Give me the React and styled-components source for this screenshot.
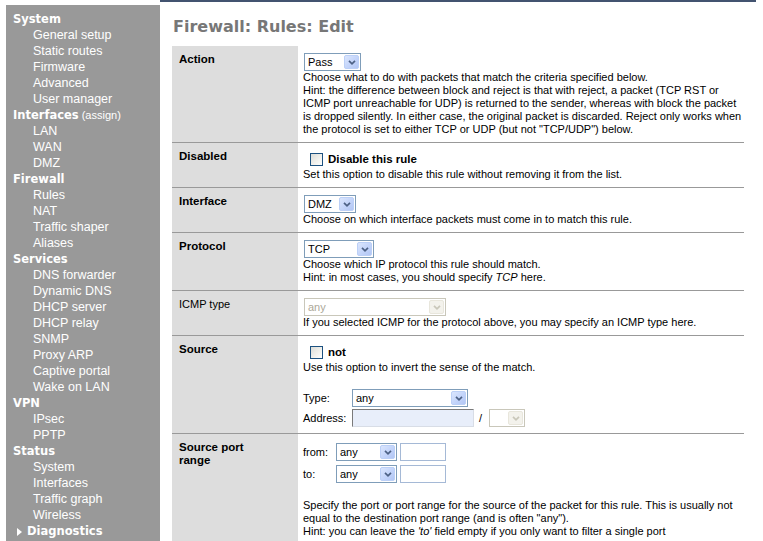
import styled, { createGlobalStyle } from "styled-components";

const GlobalStyle = createGlobalStyle`
  html, body {
    margin: 0;
    padding: 0;
    background: #ffffff;
  }
  body {
    font-family: "Liberation Sans", Arial, sans-serif;
    font-size: 11px;
    color: #000000;
  }
`;

//=========== layout ============
const Page = styled.div`
  display: flex;
  align-items: stretch;
  min-height: 100vh;
`;

const Sidebar = styled.nav`
  box-sizing: border-box;
  width: 154px;
  margin: 5px 0 0 6px;
  padding: 6px 0 0 7px;
  background: #999999;
  color: #ffffff;
`;

const Section = styled.div`
  font-family: "DejaVu Sans", Verdana, sans-serif;
  font-weight: 700;
  font-size: 11.5px;
  line-height: 16px;
  padding-left: ${(p) => (p.$collapsed ? 4 : 0)}px;
  white-space: nowrap;
`;

const SectionHint = styled.span`
  font-family: "Liberation Sans", Arial, sans-serif;
  font-weight: 400;
  font-size: 11px;
  margin-left: 3px;
`;

const Arrow = styled.span`
  display: inline-block;
  width: 0;
  height: 0;
  border-left: 5px solid #ffffff;
  border-top: 4px solid transparent;
  border-bottom: 4px solid transparent;
  margin-right: 5px;
  vertical-align: -1px;
`;

const NavItem = styled.div`
  font-family: "Liberation Sans", Arial, sans-serif;
  font-size: 12.5px;
  line-height: 16px;
  padding-left: 20px;
  white-space: nowrap;
`;

const Main = styled.main`
  flex: 1;
  padding-right: 7px;
`;

const TopBar = styled.div`
  height: 2px;
  background: #435370;
`;

const Content = styled.div`
  padding: 15px 0 0 12px;
`;

const Title = styled.h1`
  margin: 0 0 10px 1px;
  font-family: "DejaVu Sans", Verdana, sans-serif;
  font-weight: 700;
  font-size: 16px;
  line-height: 19px;
  color: #777777;
`;

//=========== form table ============
const FormTable = styled.table`
  width: 572px;
  table-layout: fixed;
  border-collapse: collapse;
  border-spacing: 0;
`;

const LabelCol = styled.col`
  width: 126px;
`;

const LabelCell = styled.td`
  padding: 7px 7px 6px;
  background: #dddddd;
  border-bottom: 1px solid #999999;
  vertical-align: top;
  font-size: ${(p) => (p.$plain ? 11 : 11.5)}px;
  font-weight: ${(p) => (p.$plain ? 400 : 700)};
  line-height: 13px;
`;

const ValueCell = styled.td`
  padding: 7px 5px 6px;
  border-bottom: 1px solid #999999;
  vertical-align: top;
  line-height: 13px;
`;

const Desc = styled.div`
  white-space: nowrap;
  margin-top: ${(p) => p.$gap || 0}px;
`;

//=========== controls ============
const SelectBox = styled.div`
  box-sizing: border-box;
  display: ${(p) => (p.$inline ? "inline-flex" : "flex")};
  align-items: center;
  width: ${(p) => p.$width}px;
  height: 18px;
  margin-left: ${(p) => (p.$inline ? 0 : 1)}px;
  border: 1px solid ${(p) => (p.$disabled ? "#c9c7ba" : "#7f9db9")};
  background: #ffffff;
  color: ${(p) => (p.$disabled ? "#aca899" : "#000000")};
  font-size: 11px;
  vertical-align: middle;
`;

const SelectText = styled.span`
  flex: 1;
  padding-left: 3px;
  white-space: nowrap;
  overflow: hidden;
`;

const SelectButton = styled.span`
  box-sizing: border-box;
  display: flex;
  align-items: center;
  justify-content: center;
  width: 15px;
  height: 14px;
  margin: 1px;
  border: 1px solid ${(p) => (p.$disabled ? "#e8e6dc" : "#bcd0f7")};
  border-radius: 2px;
  background: ${(p) =>
    p.$disabled
      ? "#f3f2ec"
      : "linear-gradient(135deg, #dbe6fd 0%, #c3d4fa 55%, #b2c6f4 100%)"};
`;

const Select = ({ width, value, disabled, inline }) => (
  <SelectBox $width={width} $disabled={disabled} $inline={inline}>
    <SelectText>{value}</SelectText>
    <SelectButton $disabled={disabled}>
      <svg width="8" height="5" viewBox="0 0 8 5">
        <path
          d="M1 0.8 L4 3.8 L7 0.8"
          fill="none"
          stroke={disabled ? "#c9c7ba" : "#4d6185"}
          strokeWidth="1.7"
        />
      </svg>
    </SelectButton>
  </SelectBox>
);

const TextInput = styled.input`
  box-sizing: border-box;
  width: ${(p) => p.$width}px;
  height: 18px;
  margin: 0;
  padding: 0 2px;
  border: 1px solid #a5b9d6;
  background: #ffffff;
  font: 11px "Liberation Sans", Arial, sans-serif;
  vertical-align: middle;
  outline: none;
`;

const AddressInput = styled(TextInput)`
  background: #e8eefa;
  border-color: #7a7a7a #d8dde6 #d8dde6 #7a7a7a;
`;

const CheckRow = styled.div`
  display: flex;
  align-items: center;
  height: 18px;
`;

const Checkbox = styled.span`
  box-sizing: border-box;
  display: inline-block;
  width: 13px;
  height: 13px;
  margin: 0 5px 0 7px;
  border: 1px solid #1c5180;
  background: linear-gradient(135deg, #dcdcd7 0%, #f2f2ee 60%, #ffffff 100%);
`;

const CheckLabel = styled.span`
  font-weight: 700;
  font-size: 11.5px;
`;

const FieldGrid = styled.div`
  display: grid;
  grid-template-columns: ${(p) => p.$labelWidth}px auto auto auto;
  justify-content: start;
  align-items: center;
  column-gap: 3px;
  row-gap: ${(p) => p.$rowGap}px;
  margin-top: ${(p) => p.$top}px;
`;

const FieldLabel = styled.span`
  white-space: nowrap;
`;

const Slash = styled.span`
  padding: 0 4px 0 2px;
`;

//=========== data ============
const menu = [
  { title: "System", items: ["General setup", "Static routes", "Firmware", "Advanced", "User manager"] },
  { title: "Interfaces", hint: "(assign)", items: ["LAN", "WAN", "DMZ"] },
  { title: "Firewall", items: ["Rules", "NAT", "Traffic shaper", "Aliases"] },
  {
    title: "Services",
    items: ["DNS forwarder", "Dynamic DNS", "DHCP server", "DHCP relay", "SNMP", "Proxy ARP", "Captive portal", "Wake on LAN"],
  },
  { title: "VPN", items: ["IPsec", "PPTP"] },
  { title: "Status", items: ["System", "Interfaces", "Traffic graph", "Wireless"] },
];

const App = () => {
  return (
    <>
      <GlobalStyle />
      <Page>
        <Sidebar>
          {menu.map((group) => (
            <div key={group.title}>
              <Section>
                {group.title}
                {group.hint && <SectionHint>{group.hint}</SectionHint>}
              </Section>
              {group.items.map((item) => (
                <NavItem key={item}>{item}</NavItem>
              ))}
            </div>
          ))}
          <Section $collapsed>
            <Arrow />
            Diagnostics
          </Section>
        </Sidebar>

        <Main>
          <TopBar />
          <Content>
            <Title>Firewall: Rules: Edit</Title>
            <FormTable>
              <colgroup>
                <LabelCol />
                <col />
              </colgroup>
              <tbody>
                <tr>
                  <LabelCell>Action</LabelCell>
                  <ValueCell>
                    <Select width={57} value="Pass" />
                    <Desc>
                      Choose what to do with packets that match the criteria specified below.
                      <br />
                      Hint: the difference between block and reject is that with reject, a packet (TCP RST or
                      <br />
                      ICMP port unreachable for UDP) is returned to the sender, whereas with block the packet
                      <br />
                      is dropped silently. In either case, the original packet is discarded. Reject only works when
                      <br />
                      the protocol is set to either TCP or UDP (but not "TCP/UDP") below.
                    </Desc>
                  </ValueCell>
                </tr>
                <tr>
                  <LabelCell>Disabled</LabelCell>
                  <ValueCell>
                    <CheckRow>
                      <Checkbox />
                      <CheckLabel>Disable this rule</CheckLabel>
                    </CheckRow>
                    <Desc>Set this option to disable this rule without removing it from the list.</Desc>
                  </ValueCell>
                </tr>
                <tr>
                  <LabelCell>Interface</LabelCell>
                  <ValueCell>
                    <Select width={52} value="DMZ" />
                    <Desc>Choose on which interface packets must come in to match this rule.</Desc>
                  </ValueCell>
                </tr>
                <tr>
                  <LabelCell>Protocol</LabelCell>
                  <ValueCell>
                    <Select width={70} value="TCP" />
                    <Desc>
                      Choose which IP protocol this rule should match.
                      <br />
                      Hint: in most cases, you should specify <i>TCP</i> here.
                    </Desc>
                  </ValueCell>
                </tr>
                <tr>
                  <LabelCell $plain>ICMP type</LabelCell>
                  <ValueCell>
                    <Select width={142} value="any" disabled />
                    <Desc>If you selected ICMP for the protocol above, you may specify an ICMP type here.</Desc>
                  </ValueCell>
                </tr>
                <tr>
                  <LabelCell>Source</LabelCell>
                  <ValueCell>
                    <CheckRow>
                      <Checkbox />
                      <CheckLabel>not</CheckLabel>
                    </CheckRow>
                    <Desc>Use this option to invert the sense of the match.</Desc>
                    <FieldGrid $labelWidth={46} $rowGap={2} $top={15}>
                      <FieldLabel>Type:</FieldLabel>
                      <Select width={116} value="any" inline />
                      <span />
                      <span />
                      <FieldLabel>Address:</FieldLabel>
                      <AddressInput $width={122} readOnly />
                      <Slash>/</Slash>
                      <Select width={36} value="" disabled inline />
                    </FieldGrid>
                  </ValueCell>
                </tr>
                <tr>
                  <LabelCell>
                    Source port
                    <br />
                    range
                  </LabelCell>
                  <ValueCell>
                    <FieldGrid $labelWidth={30} $rowGap={4} $top={2}>
                      <FieldLabel>from:</FieldLabel>
                      <Select width={61} value="any" inline />
                      <TextInput $width={46} readOnly />
                      <span />
                      <FieldLabel>to:</FieldLabel>
                      <Select width={61} value="any" inline />
                      <TextInput $width={46} readOnly />
                      <span />
                    </FieldGrid>
                    <Desc $gap={16}>
                      Specify the port or port range for the source of the packet for this rule. This is usually not
                      <br />
                      equal to the destination port range (and is often "any").
                      <br />
                      Hint: you can leave the <i>'to'</i> field empty if you only want to filter a single port
                    </Desc>
                  </ValueCell>
                </tr>
              </tbody>
            </FormTable>
          </Content>
        </Main>
      </Page>
    </>
  );
};

export default App;
